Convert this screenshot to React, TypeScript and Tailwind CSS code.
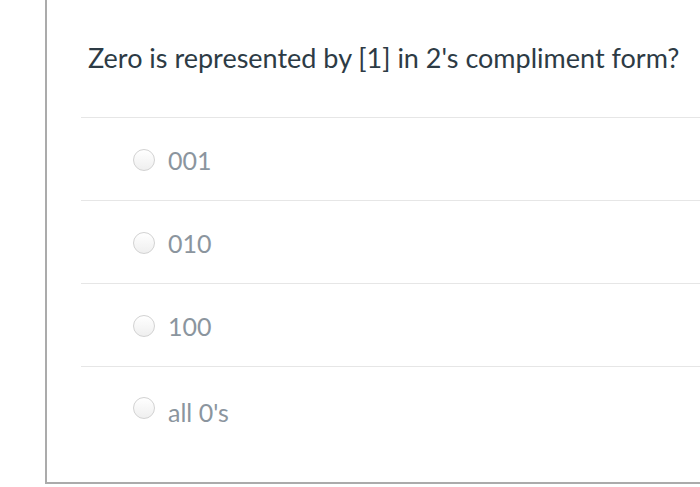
const options = ["001", "010", "100", "all 0's"];

function Radio() {
  return (
    <span className="block w-[22px] h-[22px] shrink-0 rounded-full border border-[#d2d2d2] bg-gradient-to-b from-white to-[#efefef]" />
  );
}

export default function App() {
  return (
    <div
      className="w-[700px] h-[487px] bg-white overflow-hidden"
      style={{ fontFamily: "Lato, 'Liberation Sans', sans-serif" }}
    >
      <div className="ml-[45px] w-[700px] h-[484px] border-l-2 border-b-2 border-[#ababab] pl-[34px] flex flex-col">
        {/* Question */}
        <div className="h-[117px] pt-[41px] pl-[7px]">
          <p className="text-[27px] leading-[34px] text-[#2d3b45] whitespace-nowrap">
            Zero is represented by [1] in 2's compliment form?
          </p>
        </div>

        {/* Answers */}
        {options.map((opt, i) => (
          <div
            key={opt}
            className={`border-t border-[#e6e6e6] flex pl-[52px] ${
              i === options.length - 1 ? "flex-1 items-start pt-[30px]" : "h-[83px] items-center pt-[2px]"
            }`}
          >
            <Radio />
            <span className="ml-[13px] text-[25px] leading-[30px] text-[#8b959e]">{opt}</span>
          </div>
        ))}
      </div>
    </div>
  );
}
